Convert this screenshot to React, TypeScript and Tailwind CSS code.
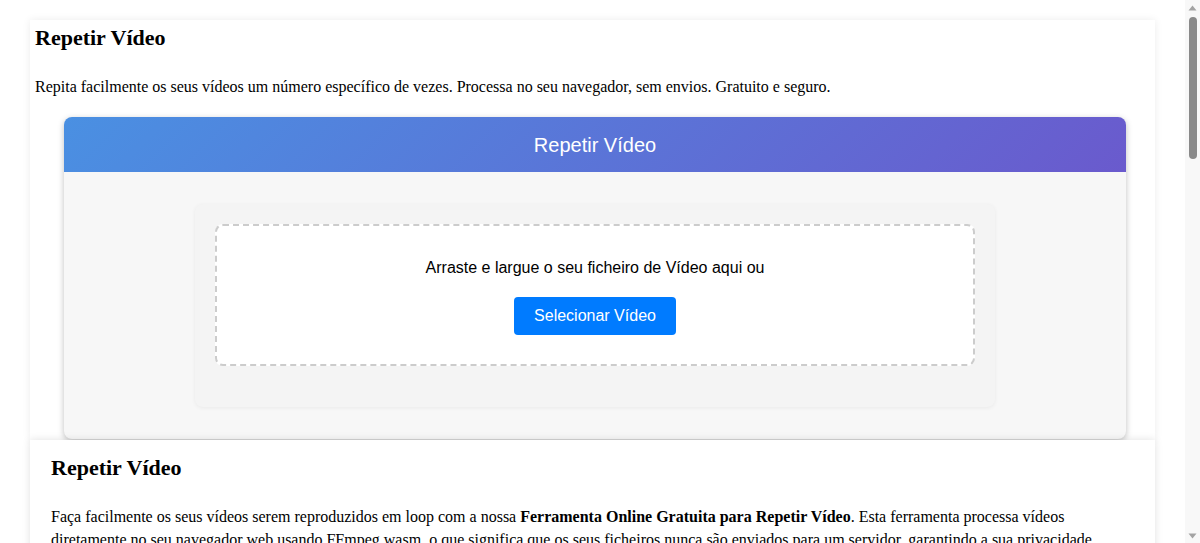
import React from "react";

const serif = { fontFamily: '"Liberation Serif", "Times New Roman", serif' };
const sans = { fontFamily: '"Liberation Sans", Arial, sans-serif' };

function Scrollbar() {
  return (
    <div className="w-[15px] h-full bg-[#f8f8f8] flex flex-col items-center shrink-0">
      <div className="h-[15px] w-full flex items-center justify-center">
        <svg width="9" height="6" viewBox="0 0 9 6"><path d="M4.5 0.5 L8.5 5.5 L0.5 5.5 Z" fill="#a3a3a3" /></svg>
      </div>
      <div className="w-[8px] h-[142px] mt-[2px] rounded-full bg-[#8a8a8a]" />
      <div className="flex-1" />
      <div className="h-[15px] w-full flex items-center justify-center">
        <svg width="9" height="6" viewBox="0 0 9 6"><path d="M0.5 0.5 L8.5 0.5 L4.5 5.5 Z" fill="#a3a3a3" /></svg>
      </div>
    </div>
  );
}

export default function App() {
  return (
    <div className="h-screen w-full flex overflow-hidden bg-white">
      <div className="flex-1 min-w-0 h-full overflow-hidden">
        <div className="bg-white pt-[20px] pb-[40px]" style={serif}>
          <div className="mx-[30px] bg-white px-[5px] pt-[5px] shadow-[0_0_8px_rgba(0,0,0,0.08)]">
            <h2 className="text-[22px] leading-[26px] font-bold text-black m-0">Repetir Vídeo</h2>
            <p className="text-[16px] leading-[19px] text-black mt-[26px] mb-[21px]">
              Repita facilmente os seus vídeos um número específico de vezes. Processa no seu navegador, sem envios. Gratuito e seguro.
            </p>
            <div className="ml-[29px] mr-[24px] rounded-[8px] overflow-hidden bg-[#f7f7f7] shadow-[0_2px_6px_rgba(0,0,0,0.25)]" style={sans}>
              <div className="h-[55px] flex items-center justify-center bg-[linear-gradient(135deg,#4a90e2,#6a5acd)]">
                <span className="text-white text-[20px] leading-[24px]">Repetir Vídeo</span>
              </div>
              <div className="pt-[32px] pb-[32px]">
                <div className="w-[800px] mx-auto bg-[#f4f4f4] rounded-[8px] p-[20px] pb-[41px] shadow-[0_1px_4px_rgba(0,0,0,0.06)]">
                  <div className="bg-white border-2 border-dashed border-[#cccccc] rounded-[8px] pt-[32px] pb-[29px] flex flex-col items-center">
                    <p className="text-[16px] leading-[19px] text-black m-0">Arraste e largue o seu ficheiro de Vídeo aqui ou</p>
                    <button className="mt-[20px] h-[38px] w-[162px] bg-[#007bff] text-white text-[16px] rounded-[4px]" style={sans}>
                      Selecionar Vídeo
                    </button>
                  </div>
                </div>
              </div>
            </div>
            <div className="h-[1px]" />
          </div>
          <div className="mx-[30px] bg-white pl-[21px] pr-[56px] pt-[15px] pb-[20px] shadow-[0_0_8px_rgba(0,0,0,0.12)]">
            <h2 className="text-[22px] leading-[26px] font-bold text-black m-0">Repetir Vídeo</h2>
            <p className="text-[16px] leading-[23px] text-black mt-[24px]">
              Faça facilmente os seus vídeos serem reproduzidos em loop com a nossa <b>Ferramenta Online Gratuita para Repetir Vídeo</b>. Esta ferramenta processa vídeos diretamente no seu navegador web usando FFmpeg.wasm, o que significa que os seus ficheiros nunca são enviados para um servidor, garantindo a sua privacidade e segurança. Basta carregar o seu vídeo, escolher quantas vezes pretende que seja repetido e descarregar o resultado em segundos.
            </p>
            <h3 className="text-[19px] font-bold mt-[24px]">Como usar</h3>
            <ol className="list-decimal pl-[40px] mt-[16px] text-[16px] leading-[23px]">
              <li>Selecione ou arraste o seu ficheiro de vídeo para a área indicada.</li>
              <li>Escolha o número de repetições pretendido.</li>
              <li>Clique em processar e aguarde alguns segundos.</li>
              <li>Descarregue o vídeo final repetido.</li>
            </ol>
          </div>
        </div>
      </div>
      <Scrollbar />
    </div>
  );
}
